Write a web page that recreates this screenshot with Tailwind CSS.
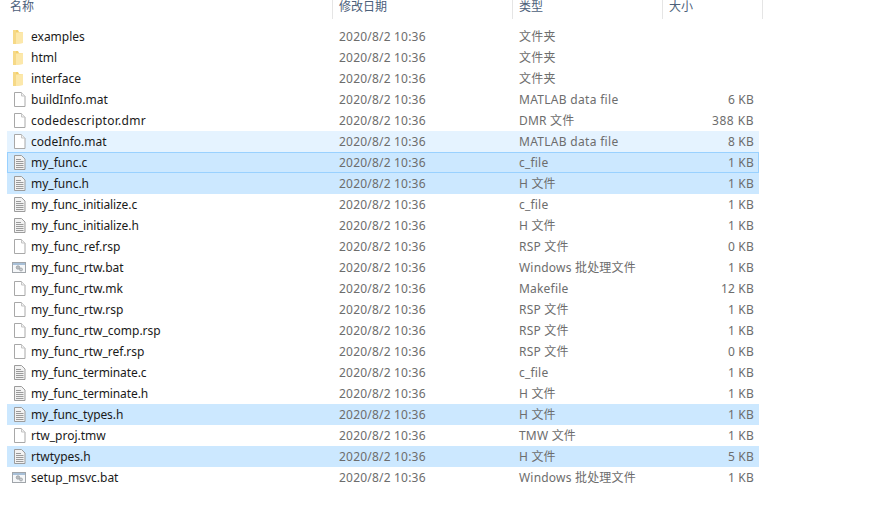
<!DOCTYPE html>
<html lang="en">
<head>
    <meta charset="UTF-8">
    <title>Files</title>
    <script src="https://cdn.jsdelivr.net/npm/@tailwindcss/browser@4"></script>
</head>
<body class="bg-white overflow-hidden font-['Noto_Sans','Noto_Sans_CJK_SC',sans-serif] text-[12px]">
    <!-- icon defs -->
    <svg width="0" height="0" class="absolute">
        <symbol id="folder" viewBox="0 0 10 14">
            <path d="M0 0 H5 L6 2 H10 V13 L0 14 Z" fill="#f3cf6b"/>
            <path d="M3 2.5 L10 2 V13 L3 14 Z" fill="#fce8ab"/>
            <path d="M0 0 H3 V14 H0 Z" fill="#f6d987"/>
        </symbol>
        <symbol id="blank" viewBox="0 0 13 15">
            <path d="M1.5 0.5 H8.5 L12 4 V14.5 H1.5 Z" fill="#fff" stroke="#a8a8a8"/>
            <path d="M8.5 0.5 V4 H12" fill="#f2f2f2" stroke="#c4c4c4"/>
        </symbol>
        <symbol id="text" viewBox="0 0 13 15">
            <path d="M1.5 0.5 H8.5 L12 4 V14.5 H1.5 Z" fill="#f2f2f2" stroke="#9c9c9c"/>
            <path d="M3 4.5 H8 M3 6.5 H10.5 M3 8.5 H10.5 M3 10.5 H10.5 M3 12.5 H10.5" stroke="#9a9a9a" fill="none"/>
        </symbol>
        <symbol id="bat" viewBox="0 0 14 13">
            <rect x="0.5" y="1.5" width="13" height="10" fill="#f5f7f9" stroke="#a0a5aa"/>
            <rect x="1" y="2" width="12" height="2" fill="#a8c0d8"/>
            <circle cx="6" cy="6.5" r="1.8" fill="#b8bcc0" stroke="#8c9094" stroke-width="0.6"/>
            <circle cx="9" cy="8.5" r="1.5" fill="#c8ccd0" stroke="#8c9094" stroke-width="0.6"/>
        </symbol>
    </svg>

    <!-- Column headers -->
    <div class="h-[19px] grid grid-cols-[333px_180px_150px_100px] w-[763px] text-[#4c607a] leading-[14px]">
        <div class="pl-[10px] border-r border-[#e5e5e5]">名称</div>
        <div class="pl-[6px] border-r border-[#e5e5e5]">修改日期</div>
        <div class="pl-[6px] border-r border-[#e5e5e5]">类型</div>
        <div class="pl-[6px] border-r border-[#e5e5e5]">大小</div>
    </div>

    <!-- File list -->
    <div class="mt-[7px] ml-[7px] w-[752px] text-[#6d6d6d] leading-[21px] tracking-[0.2px]">
        <div class="h-[21px] grid grid-cols-[325px_180px_150px_97px]">
            <div class="flex items-center text-[#1a1a1a] tracking-normal"><svg class="w-[10px] h-[14px] ml-[6px] mr-[8px]"><use href="#folder"/></svg>examples</div>
            <div class="pl-[7px]">2020/8/2 10:36</div><div class="pl-[7px]">文件夹</div><div class="text-right pr-[5px]"></div>
        </div>
        <div class="h-[21px] grid grid-cols-[325px_180px_150px_97px]">
            <div class="flex items-center text-[#1a1a1a] tracking-normal"><svg class="w-[10px] h-[14px] ml-[6px] mr-[8px]"><use href="#folder"/></svg>html</div>
            <div class="pl-[7px]">2020/8/2 10:36</div><div class="pl-[7px]">文件夹</div><div class="text-right pr-[5px]"></div>
        </div>
        <div class="h-[21px] grid grid-cols-[325px_180px_150px_97px]">
            <div class="flex items-center text-[#1a1a1a] tracking-normal"><svg class="w-[10px] h-[14px] ml-[6px] mr-[8px]"><use href="#folder"/></svg>interface</div>
            <div class="pl-[7px]">2020/8/2 10:36</div><div class="pl-[7px]">文件夹</div><div class="text-right pr-[5px]"></div>
        </div>
        <div class="h-[21px] grid grid-cols-[325px_180px_150px_97px]">
            <div class="flex items-center text-[#1a1a1a] tracking-normal"><svg class="w-[13px] h-[15px] ml-[6px] mr-[5px]"><use href="#blank"/></svg>buildInfo.mat</div>
            <div class="pl-[7px]">2020/8/2 10:36</div><div class="pl-[7px] tracking-[0.3px]">MATLAB data file</div><div class="text-right pr-[5px]">6 KB</div>
        </div>
        <div class="h-[21px] grid grid-cols-[325px_180px_150px_97px]">
            <div class="flex items-center text-[#1a1a1a] tracking-[0.3px]"><svg class="w-[13px] h-[15px] ml-[6px] mr-[5px]"><use href="#blank"/></svg>codedescriptor.dmr</div>
            <div class="pl-[7px]">2020/8/2 10:36</div><div class="pl-[7px]">DMR 文件</div><div class="text-right pr-[5px] tracking-[0.5px]">388 KB</div>
        </div>
        <div class="h-[21px] grid grid-cols-[325px_180px_150px_97px] bg-[#e5f3ff]">
            <div class="flex items-center text-[#1a1a1a] tracking-normal"><svg class="w-[13px] h-[15px] ml-[6px] mr-[5px]"><use href="#blank"/></svg>codeInfo.mat</div>
            <div class="pl-[7px]">2020/8/2 10:36</div><div class="pl-[7px] tracking-[0.3px]">MATLAB data file</div><div class="text-right pr-[5px]">8 KB</div>
        </div>
        <div class="h-[21px] grid grid-cols-[325px_180px_150px_97px] bg-[#cce8ff] outline outline-1 -outline-offset-1 outline-[#99d1ff]">
            <div class="flex items-center text-[#1a1a1a] tracking-normal"><svg class="w-[13px] h-[15px] ml-[6px] mr-[5px]"><use href="#text"/></svg>my_func.c</div>
            <div class="pl-[7px]">2020/8/2 10:36</div><div class="pl-[7px]">c_file</div><div class="text-right pr-[5px]">1 KB</div>
        </div>
        <div class="h-[21px] grid grid-cols-[325px_180px_150px_97px] bg-[#cce8ff]">
            <div class="flex items-center text-[#1a1a1a] tracking-normal"><svg class="w-[13px] h-[15px] ml-[6px] mr-[5px]"><use href="#text"/></svg>my_func.h</div>
            <div class="pl-[7px]">2020/8/2 10:36</div><div class="pl-[7px]">H 文件</div><div class="text-right pr-[5px]">1 KB</div>
        </div>
        <div class="h-[21px] grid grid-cols-[325px_180px_150px_97px]">
            <div class="flex items-center text-[#1a1a1a] tracking-[-0.1px]"><svg class="w-[13px] h-[15px] ml-[6px] mr-[5px]"><use href="#text"/></svg>my_func_initialize.c</div>
            <div class="pl-[7px]">2020/8/2 10:36</div><div class="pl-[7px]">c_file</div><div class="text-right pr-[5px]">1 KB</div>
        </div>
        <div class="h-[21px] grid grid-cols-[325px_180px_150px_97px]">
            <div class="flex items-center text-[#1a1a1a] tracking-[-0.1px]"><svg class="w-[13px] h-[15px] ml-[6px] mr-[5px]"><use href="#text"/></svg>my_func_initialize.h</div>
            <div class="pl-[7px]">2020/8/2 10:36</div><div class="pl-[7px]">H 文件</div><div class="text-right pr-[5px]">1 KB</div>
        </div>
        <div class="h-[21px] grid grid-cols-[325px_180px_150px_97px]">
            <div class="flex items-center text-[#1a1a1a] tracking-normal"><svg class="w-[13px] h-[15px] ml-[6px] mr-[5px]"><use href="#blank"/></svg>my_func_ref.rsp</div>
            <div class="pl-[7px]">2020/8/2 10:36</div><div class="pl-[7px]">RSP 文件</div><div class="text-right pr-[5px]">0 KB</div>
        </div>
        <div class="h-[21px] grid grid-cols-[325px_180px_150px_97px]">
            <div class="flex items-center text-[#1a1a1a] tracking-normal"><svg class="w-[14px] h-[13px] ml-[5px] mr-[5px]"><use href="#bat"/></svg>my_func_rtw.bat</div>
            <div class="pl-[7px]">2020/8/2 10:36</div><div class="pl-[7px]">Windows 批处理文件</div><div class="text-right pr-[5px]">1 KB</div>
        </div>
        <div class="h-[21px] grid grid-cols-[325px_180px_150px_97px]">
            <div class="flex items-center text-[#1a1a1a] tracking-normal"><svg class="w-[13px] h-[15px] ml-[6px] mr-[5px]"><use href="#blank"/></svg>my_func_rtw.mk</div>
            <div class="pl-[7px]">2020/8/2 10:36</div><div class="pl-[7px]">Makefile</div><div class="text-right pr-[5px]">12 KB</div>
        </div>
        <div class="h-[21px] grid grid-cols-[325px_180px_150px_97px]">
            <div class="flex items-center text-[#1a1a1a] tracking-normal"><svg class="w-[13px] h-[15px] ml-[6px] mr-[5px]"><use href="#blank"/></svg>my_func_rtw.rsp</div>
            <div class="pl-[7px]">2020/8/2 10:36</div><div class="pl-[7px]">RSP 文件</div><div class="text-right pr-[5px]">1 KB</div>
        </div>
        <div class="h-[21px] grid grid-cols-[325px_180px_150px_97px]">
            <div class="flex items-center text-[#1a1a1a] tracking-normal"><svg class="w-[13px] h-[15px] ml-[6px] mr-[5px]"><use href="#blank"/></svg>my_func_rtw_comp.rsp</div>
            <div class="pl-[7px]">2020/8/2 10:36</div><div class="pl-[7px]">RSP 文件</div><div class="text-right pr-[5px]">1 KB</div>
        </div>
        <div class="h-[21px] grid grid-cols-[325px_180px_150px_97px]">
            <div class="flex items-center text-[#1a1a1a] tracking-normal"><svg class="w-[13px] h-[15px] ml-[6px] mr-[5px]"><use href="#blank"/></svg>my_func_rtw_ref.rsp</div>
            <div class="pl-[7px]">2020/8/2 10:36</div><div class="pl-[7px]">RSP 文件</div><div class="text-right pr-[5px]">0 KB</div>
        </div>
        <div class="h-[21px] grid grid-cols-[325px_180px_150px_97px]">
            <div class="flex items-center text-[#1a1a1a] tracking-[-0.1px]"><svg class="w-[13px] h-[15px] ml-[6px] mr-[5px]"><use href="#text"/></svg>my_func_terminate.c</div>
            <div class="pl-[7px]">2020/8/2 10:36</div><div class="pl-[7px]">c_file</div><div class="text-right pr-[5px]">1 KB</div>
        </div>
        <div class="h-[21px] grid grid-cols-[325px_180px_150px_97px]">
            <div class="flex items-center text-[#1a1a1a] tracking-[-0.1px]"><svg class="w-[13px] h-[15px] ml-[6px] mr-[5px]"><use href="#text"/></svg>my_func_terminate.h</div>
            <div class="pl-[7px]">2020/8/2 10:36</div><div class="pl-[7px]">H 文件</div><div class="text-right pr-[5px]">1 KB</div>
        </div>
        <div class="h-[21px] grid grid-cols-[325px_180px_150px_97px] bg-[#cce8ff]">
            <div class="flex items-center text-[#1a1a1a] tracking-[-0.1px]"><svg class="w-[13px] h-[15px] ml-[6px] mr-[5px]"><use href="#text"/></svg>my_func_types.h</div>
            <div class="pl-[7px]">2020/8/2 10:36</div><div class="pl-[7px]">H 文件</div><div class="text-right pr-[5px]">1 KB</div>
        </div>
        <div class="h-[21px] grid grid-cols-[325px_180px_150px_97px]">
            <div class="flex items-center text-[#1a1a1a] tracking-normal"><svg class="w-[13px] h-[15px] ml-[6px] mr-[5px]"><use href="#blank"/></svg>rtw_proj.tmw</div>
            <div class="pl-[7px]">2020/8/2 10:36</div><div class="pl-[7px]">TMW 文件</div><div class="text-right pr-[5px]">1 KB</div>
        </div>
        <div class="h-[21px] grid grid-cols-[325px_180px_150px_97px] bg-[#cce8ff]">
            <div class="flex items-center text-[#1a1a1a] tracking-normal"><svg class="w-[13px] h-[15px] ml-[6px] mr-[5px]"><use href="#text"/></svg>rtwtypes.h</div>
            <div class="pl-[7px]">2020/8/2 10:36</div><div class="pl-[7px]">H 文件</div><div class="text-right pr-[5px]">5 KB</div>
        </div>
        <div class="h-[21px] grid grid-cols-[325px_180px_150px_97px]">
            <div class="flex items-center text-[#1a1a1a] tracking-normal"><svg class="w-[14px] h-[13px] ml-[5px] mr-[5px]"><use href="#bat"/></svg>setup_msvc.bat</div>
            <div class="pl-[7px]">2020/8/2 10:36</div><div class="pl-[7px]">Windows 批处理文件</div><div class="text-right pr-[5px]">1 KB</div>
        </div>
    </div>
</body>
</html>
